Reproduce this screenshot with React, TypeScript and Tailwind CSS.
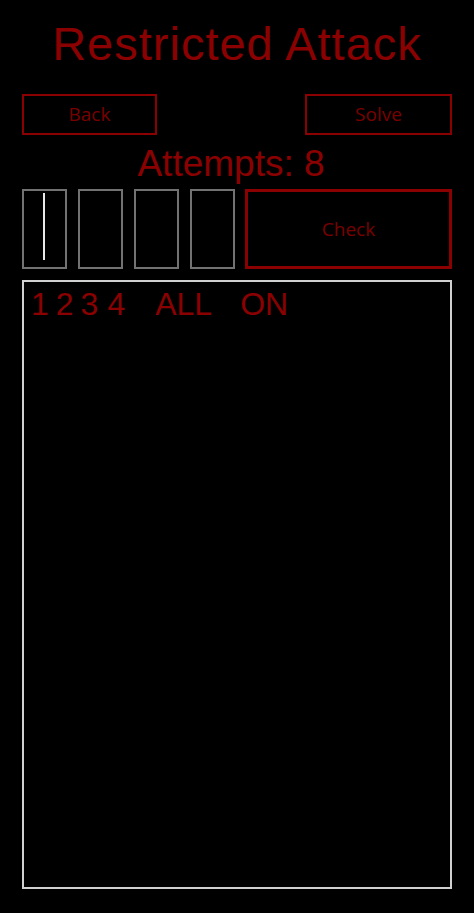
export default function App() {
  const sans = { fontFamily: '"Liberation Sans", Arial, sans-serif' }
  const thin = { fontFamily: '"Open Sans", "Noto Sans", sans-serif' }

  return (
    <div className="h-[913px] w-[474px] overflow-hidden bg-black text-[#8b0000]" style={sans}>
      {/* Title */}
      <h1 className="pt-[20px] text-center text-[47px] leading-[47px] font-normal tracking-[1px]">Restricted Attack</h1>

      {/* Back / Solve */}
      <div className="mt-[27px] flex justify-between px-[22px]">
        <button
          className="flex h-[41px] w-[135px] items-center justify-center border-2 border-[#8b0000] text-[19px] font-normal text-[#7a0000]"
          style={thin}
        >
          Back
        </button>
        <button
          className="flex h-[41px] w-[147px] items-center justify-center border-2 border-[#8b0000] text-[19px] font-normal text-[#7a0000]"
          style={thin}
        >
          Solve
        </button>
      </div>

      {/* Attempts */}
      <div className="mt-[10px] flex justify-center pr-[12px] text-[37px] leading-[37px]">Attempts: 8</div>

      {/* Code inputs + check */}
      <div className="mt-[7px] flex h-[80px] px-[22px]">
        <div className="flex gap-[11px]">
          {[0, 1, 2, 3].map((i) => (
            <div key={i} className="relative h-[80px] w-[45px] border-2 border-[#727272]">
              {i === 0 && <div className="absolute left-[19px] top-[2px] h-[67px] w-[2px] bg-[#e8e8e8]" />}
            </div>
          ))}
        </div>
        <button
          className="ml-[10px] flex flex-1 items-center justify-center border-[3px] border-[#8b0000] text-[19px] font-normal text-[#7a0000]"
          style={thin}
        >
          Check
        </button>
      </div>

      {/* Log panel */}
      <div className="mx-[22px] mt-[11px] h-[609px] border-2 border-[#d0d0d0] pl-[5px] pt-[6px]">
        <div className="flex text-[32px] leading-[32px]">
          <span className="ml-[2px]">1</span>
          <span className="ml-[7px]">2</span>
          <span className="ml-[7px]">3</span>
          <span className="ml-[9px]">4</span>
          <span className="ml-[30px]">ALL</span>
          <span className="ml-[28px]">ON</span>
        </div>
      </div>
    </div>
  )
}
